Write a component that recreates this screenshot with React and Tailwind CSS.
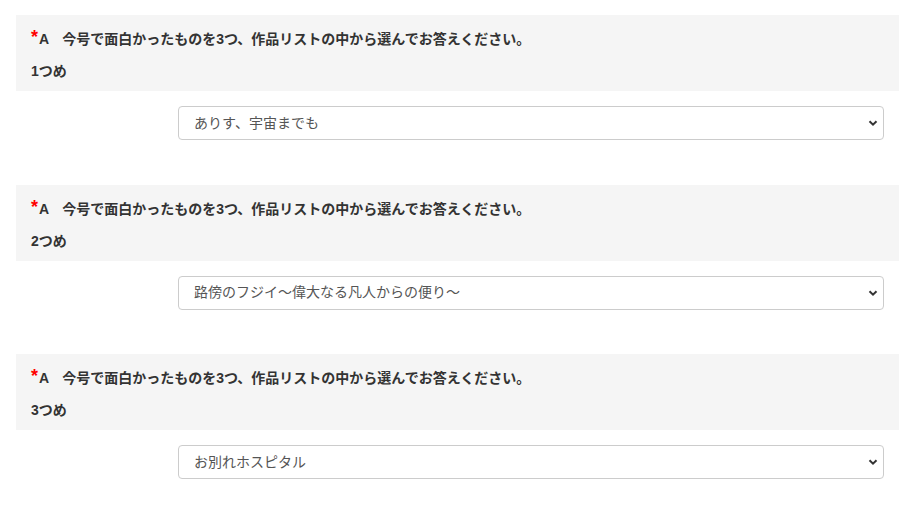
import React from "react";

const questions = [
  { no: "1つめ", value: "ありす、宇宙までも" },
  { no: "2つめ", value: "路傍のフジイ～偉大なる凡人からの便り～" },
  { no: "3つめ", value: "お別れホスピタル" },
];

function Chevron() {
  return (
    <svg width="10" height="10" viewBox="0 0 10 10" className="absolute right-[6px] top-1/2 -translate-y-1/2 pointer-events-none">
      <path d="M1.5 3.2 L5 6.7 L8.5 3.2" fill="none" stroke="#333" strokeWidth="2" />
    </svg>
  );
}

export default function App() {
  return (
    <div className="bg-white w-[919px] h-[509px] pt-[15px] px-[16px] text-[#333]" style={{ fontFamily: '"Liberation Sans", "Noto Sans CJK JP", sans-serif' }}>
      {questions.map((q, i) => (
        <div key={i} className="mb-[44.5px]">
          <div className="bg-[#f5f5f5] w-[883px] h-[76px] px-[15px] pt-[15px] text-[14px] font-bold">
            <div className="flex items-start h-[19px] leading-[19px]">
              <span className="text-[#ff0000] text-[18px] leading-[15px] font-bold mr-[1px]">*</span>
              <span className="mr-[13px]">A</span>
              <span>今号で面白かったものを3つ、作品リストの中から選んでお答えください。</span>
            </div>
            <div className="mt-[13px] leading-[19px]">{q.no}</div>
          </div>
          <div className="pl-[162px] pt-[15px]">
            <div className="relative w-[706px] h-[34px]">
              <select
                defaultValue={q.value}
                className="appearance-none w-full h-full border border-[#ccc] rounded-[4px] bg-white pl-[15px] pr-6 text-[14px] text-[#555] outline-none"
              >
                <option>{q.value}</option>
              </select>
              <Chevron />
            </div>
          </div>
        </div>
      ))}
    </div>
  );
}
